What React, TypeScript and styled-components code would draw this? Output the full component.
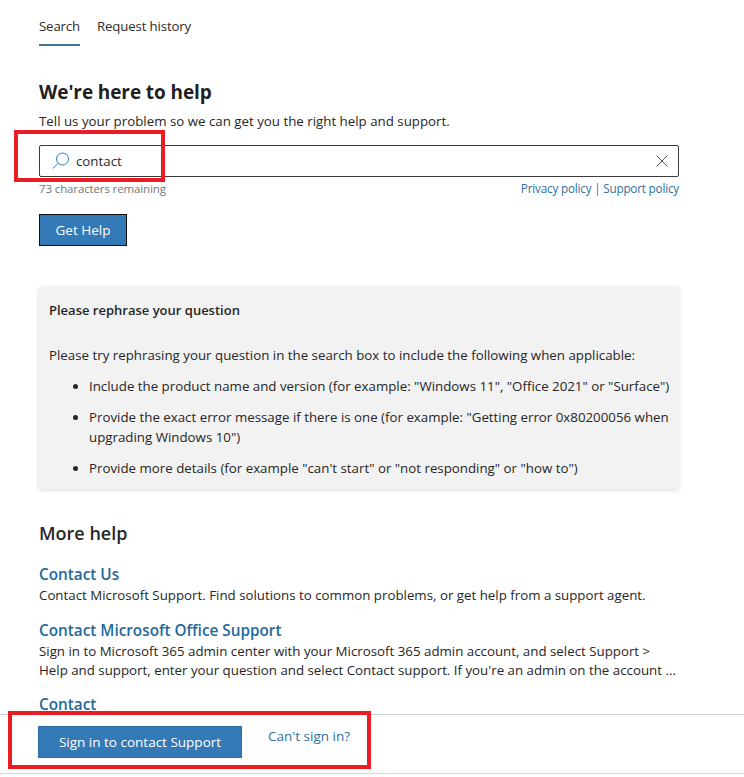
import React from 'react';
import styled, { createGlobalStyle } from 'styled-components';

const GlobalStyle = createGlobalStyle`
    html, body {
        margin: 0;
        padding: 0;
        background: #fff;
    }
    body {
        font-family: "Open Sans", "Noto Sans", "Liberation Sans", sans-serif;
        color: #262626;
    }
`

const Page = styled.div`
    position: relative;
    width: 744px;
    height: 777px;
    overflow: hidden;
`

const Content = styled.div`
    padding: 0 65px 0 39px;
    height: 714px;
    overflow: hidden;
`

const Tabs = styled.div`
    display: flex;
    gap: 17px;
    height: 44px;
`

const Tab = styled.div<{ $active?: boolean }>`
    font-size: 13.2px;
    letter-spacing: -0.12px;
    line-height: 18px;
    padding-top: 17px;
    height: 27px;
    color: #2b2b2b;
    border-bottom: ${p => (p.$active ? '2px solid #3f7596' : '2px solid transparent')};
`

const Title = styled.h1`
    margin: 35px 0 0;
    font-size: 19px;
    line-height: 26px;
    font-weight: 700;
    letter-spacing: -0.1px;
    color: #1f1f1f;
`

const Lead = styled.p`
    margin: 7px 0 0;
    font-size: 13.3px;
    line-height: 18px;
`

const SearchBox = styled.div`
    display: flex;
    align-items: center;
    box-sizing: border-box;
    height: 32px;
    margin-top: 15px;
    padding: 0 9px 0 12px;
    border: 1px solid #3b3b3b;
    border-radius: 2px;
`

const SearchText = styled.span`
    flex: 1;
    margin-left: 6px;
    font-size: 13.3px;
    color: #2b2b2b;
`

const SearchMeta = styled.div`
    display: flex;
    justify-content: space-between;
    align-items: center;
    height: 20px;
    margin-top: 1px;
    font-size: 11.5px;
    letter-spacing: -0.13px;
    color: #767676;
`

const PolicyLinks = styled.span`
    font-size: 11.7px;
    letter-spacing: -0.19px;
    color: #2f6f9f;
`

const PrimaryButton = styled.button<{ $outlined?: boolean }>`
    box-sizing: border-box;
    background: #337ab7;
    color: #fff;
    font-family: inherit;
    font-size: 13.5px;
    border: 1px solid ${p => (p.$outlined ? '#111' : '#2e6da4')};
    padding: 0;
`

const HelpButton = styled(PrimaryButton)`
    display: block;
    width: 88px;
    height: 32px;
    margin-top: 16px;
`

const Notice = styled.section`
    box-sizing: border-box;
    height: 202px;
    margin-top: 41px;
    padding: 13px 0 0 10px;
    background: #f2f2f2;
    border-radius: 2px;
    box-shadow: 0 1px 4px rgba(0, 0, 0, 0.16);
    font-size: 13.3px;
`

const NoticeTitle = styled.div`
    font-size: 13px;
    font-weight: 600;
    line-height: 20px;
`

const NoticeLead = styled.p`
    margin: 25px 0 0;
    line-height: 20px;
`

const NoticeList = styled.ul`
    margin: 11px 0 0;
    padding: 0 0 0 40px;
`

const NoticeItem = styled.li`
    line-height: 20px;
    margin-bottom: 11px;
`

const MoreTitle = styled.h2`
    margin: 31px 0 0;
    padding-bottom: 3.5px;
    font-size: 18px;
    line-height: 26px;
    font-weight: 600;
    color: #262626;
`

const ResultTitle = styled.div`
    margin-top: 14.5px;
    font-size: 15.3px;
    line-height: 20px;
    font-weight: 600;
    color: #1f6a99;
`

const ResultText = styled.p`
    margin: 2px 0 0;
    font-size: 13.3px;
    line-height: 19px;
    white-space: nowrap;
`

const SignInBar = styled.div`
    box-sizing: border-box;
    display: flex;
    align-items: flex-start;
    gap: 26px;
    height: 60px;
    padding: 11px 0 0 38px;
    background: #fff;
    border-top: 1px solid #cfcfcf;
    border-bottom: 1px solid #d6d6d6;
`

const SignInButton = styled(PrimaryButton)`
    width: 204px;
    height: 32px;
`

const CantSignIn = styled.span`
    margin-top: 1px;
    font-size: 13.5px;
    line-height: 18px;
    color: #2f6f9f;
`

const Highlight = styled.div<{ $top: number; $left: number; $width: number; $height: number }>`
    position: absolute;
    top: ${p => p.$top}px;
    left: ${p => p.$left}px;
    width: ${p => p.$width}px;
    height: ${p => p.$height}px;
    box-sizing: border-box;
    border: 4px solid #ec1c24;
`

const SearchIcon = () => (
    <svg width="18" height="18" viewBox="0 0 18 18" fill="none" stroke="#2f7fc0" strokeWidth="1">
        <circle cx="10.5" cy="7" r="6" />
        <path d="M6.2 11.3 L0.8 16.5" />
    </svg>
);

const ClearIcon = () => (
    <svg width="14" height="14" viewBox="0 0 14 14" fill="none" stroke="#555" strokeWidth="1">
        <path d="M1.5 1.5 L12.5 12.5 M12.5 1.5 L1.5 12.5" />
    </svg>
);

const App: React.FC = () => (
    <Page>
        <GlobalStyle />
        <Content>
            <Tabs>
                <Tab $active>Search</Tab>
                <Tab>Request history</Tab>
            </Tabs>
            <Title>We're here to help</Title>
            <Lead>Tell us your problem so we can get you the right help and support.</Lead>
            <SearchBox>
                <SearchIcon />
                <SearchText>contact</SearchText>
                <ClearIcon />
            </SearchBox>
            <SearchMeta>
                <span>73 characters remaining</span>
                <PolicyLinks>Privacy policy | Support policy</PolicyLinks>
            </SearchMeta>
            <HelpButton $outlined>Get Help</HelpButton>
            <Notice>
                <NoticeTitle>Please rephrase your question</NoticeTitle>
                <NoticeLead>Please try rephrasing your question in the search box to include the following when applicable:</NoticeLead>
                <NoticeList>
                    <NoticeItem>Include the product name and version (for example: "Windows 11", "Office 2021" or "Surface")</NoticeItem>
                    <NoticeItem>Provide the exact error message if there is one (for example: "Getting error 0x80200056 when upgrading Windows 10")</NoticeItem>
                    <NoticeItem>Provide more details (for example "can't start" or "not responding" or "how to")</NoticeItem>
                </NoticeList>
            </Notice>
            <MoreTitle>More help</MoreTitle>
            <ResultTitle>Contact Us</ResultTitle>
            <ResultText>Contact Microsoft Support. Find solutions to common problems, or get help from a support agent.</ResultText>
            <ResultTitle>Contact Microsoft Office Support</ResultTitle>
            <ResultText>
                Sign in to Microsoft 365 admin center with your Microsoft 365 admin account, and select Support &gt;<br />
                Help and support, enter your question and select Contact support. If you're an admin on the account ...
            </ResultText>
            <ResultTitle>Contact</ResultTitle>
        </Content>
        <SignInBar>
            <SignInButton>Sign in to contact Support</SignInButton>
            <CantSignIn>Can't sign in?</CantSignIn>
        </SignInBar>
        <Highlight $top={130} $left={14} $width={151} $height={52} />
        <Highlight $top={711} $left={8} $width={363} $height={58} />
    </Page>
);

export default App;
